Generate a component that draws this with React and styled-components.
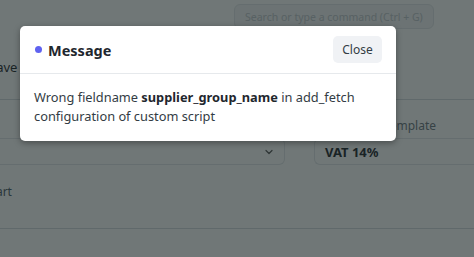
import React from "react"
import styled, { createGlobalStyle } from "styled-components"

const Global = createGlobalStyle`
html,body{margin:0;padding:0;}
body{font-family:"Noto Sans","Open Sans",sans-serif;background:#fff;}
`

export default function App() {
  return (
    <>
      <Global />
      <Page>
        <Navbar>
          <Search>Search or type a command (Ctrl + G)</Search>
        </Navbar>
        <Toolbar>
          <ToolText>Save</ToolText>
        </Toolbar>
        <Section>
          <Labels>
            <Label />
            <Label>Purchase Tax Template</Label>
          </Labels>
          <Inputs>
            <Select>
              <Chevron viewBox="0 0 12 12">
                <path d="M3 4.5l3 3 3-3" fill="none" stroke="#555" strokeWidth="1.2" strokeLinecap="round" strokeLinejoin="round" />
              </Chevron>
            </Select>
            <Field>VAT 14%</Field>
          </Inputs>
        </Section>
        <Section2>
          <Small>Start</Small>
        </Section2>
        <Overlay>
          <Modal>
            <Header>
              <Dot />
              <Title>Message</Title>
              <CloseBtn>Close</CloseBtn>
            </Header>
            <Body>
              Wrong fieldname <b>supplier_group_name</b> in add_fetch configuration of custom script
            </Body>
          </Modal>
        </Overlay>
      </Page>
    </>
  )
}

const Page = styled.div`
position:relative;
width:474px;height:257px;overflow:hidden;
background:#fff;
`
const Navbar = styled.div`
height:38px;display:flex;align-items:flex-start;
padding:4px 0 0 234px;box-sizing:border-box;
`
const Search = styled.div`
width:200px;height:25px;box-sizing:border-box;
background:#f4f5f6;border:1px solid #e2e6e9;border-radius:6px;
padding-left:10px;display:flex;align-items:center;
font-size:10.5px;color:#c0c6cc;white-space:nowrap;overflow:hidden;
`
const Toolbar = styled.div`
height:62px;display:flex;align-items:center;
border-bottom:1px solid #d6dbe0;box-sizing:border-box;
padding-bottom:4px;
`
const ToolText = styled.span`
font-size:13px;color:#1f272e;margin-left:-11px;
`
const Section = styled.div`
padding-top:14px;
`
const Labels = styled.div`
display:flex;height:22px;align-items:center;
`
const Label = styled.div`
font-size:12px;color:#6c7680;
&:first-child{width:314px;}
&:last-child{margin-left:-7px;}
`
const Inputs = styled.div`
display:flex;gap:29px;margin-top:2px;
`
const Select = styled.div`
width:285px;height:27px;box-sizing:border-box;
border:1px solid #e2e6e9;border-left:none;border-radius:0 6px 6px 0;
display:flex;align-items:center;justify-content:flex-end;padding-right:9px;
`
const Chevron = styled.svg`
width:12px;height:12px;
`
const Field = styled.div`
flex:1;height:27px;box-sizing:border-box;
border:1px solid #e2e6e9;border-right:none;border-radius:6px 0 0 6px;
display:flex;align-items:center;padding-left:10px;
font-size:13px;font-weight:700;color:#1f272e;
`
const Section2 = styled.div`
height:64px;border-bottom:1px solid #d6dbe0;box-sizing:border-box;
padding-top:18px;
`
const Small = styled.div`
font-size:12px;color:#4c5a67;margin-left:-15px;
`
const Overlay = styled.div`
position:absolute;inset:0;
background:rgba(22,32,32,0.61);
padding:26px 0 0 20px;box-sizing:border-box;
`
const Modal = styled.div`
width:376px;background:#fff;border-radius:5px;
box-shadow:0 2px 6px rgba(0,0,0,0.35);
overflow:hidden;
`
const Header = styled.div`
height:48px;box-sizing:border-box;
display:flex;align-items:center;
padding:0 14px 0 15px;
border-bottom:1px solid #e6e9ec;
`
const Dot = styled.span`
width:7px;height:7px;border-radius:50%;background:#5f62f0;
margin-right:6px;
`
const Title = styled.div`
flex:1;font-size:14.5px;font-weight:700;color:#1f272e;
`
const CloseBtn = styled.div`
width:49px;height:27px;border-radius:5px;background:#f0f2f5;
display:flex;align-items:center;justify-content:center;
font-size:12px;color:#333c44;
`
const Body = styled.div`
padding:14px 34px 15px 14px;
font-size:12.8px;line-height:19px;color:#333c44;
b{font-weight:700;color:#1f272e;}
`
